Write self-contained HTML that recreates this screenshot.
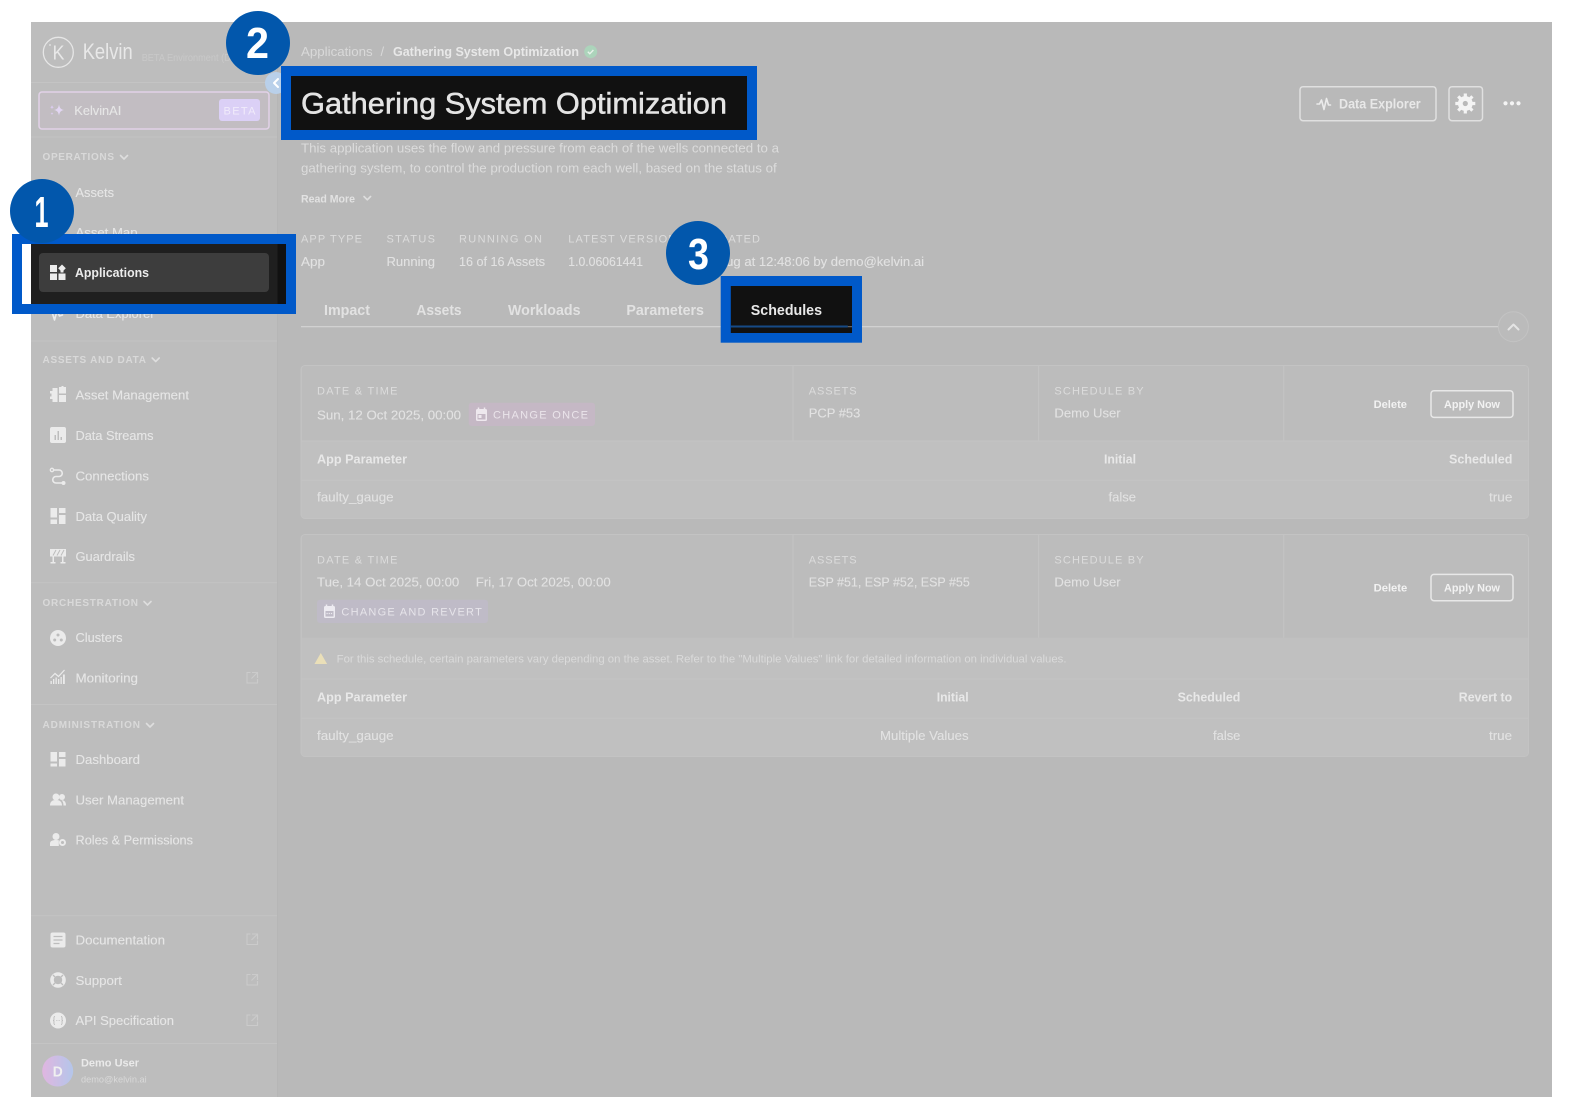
<!DOCTYPE html>
<html lang="en">
<head>
<meta charset="utf-8">
<title>Gathering System Optimization</title>
<style>
html,body{margin:0;padding:0;background:#fff;width:1584px;height:1120px;overflow:hidden}
svg{display:block}
text{font-family:"Liberation Sans",Arial,sans-serif;white-space:pre}
.n{font-size:13px;fill:#e6e6e6;stroke:#e6e6e6;stroke-width:.12}
.nb{font-size:13px;fill:#ececec;font-weight:bold}
.h{font-size:10px;fill:#d9d9d9;font-weight:bold}
.l{font-size:11px;fill:#dcdcdc}
.v{font-size:13px;fill:#e2e2e2;stroke:#e2e2e2;stroke-width:.1}
.b{font-size:13px;fill:#e8e8e8;font-weight:bold}
.s{font-size:11px;fill:#f2f2f2;font-weight:bold}
.t{font-size:15px;fill:#e2e2e2;font-weight:bold}
.i{fill:#ebebeb}
.ln{fill:none;stroke:#ebebeb;stroke-width:1.6;stroke-linecap:round;stroke-linejoin:round}
.ch{fill:none;stroke:#dedede;stroke-width:1.6;stroke-linecap:round;stroke-linejoin:round}
.ex{fill:none;stroke:#cbcbcb;stroke-width:1.1}
.d{stroke:#c4c4c4;stroke-width:1}
.num{font-size:44px;font-weight:bold;fill:#fff}
</style>
</head>
<body>
<svg xmlns="http://www.w3.org/2000/svg" width="1584" height="1120" viewBox="0 0 1584 1120">
<defs>
<linearGradient id="av" x1="0" y1="0" x2="1" y2="0"><stop offset="0" stop-color="#e0b6e0"/><stop offset="1" stop-color="#b4c6ea"/></linearGradient>
<filter id="soft" x="0" y="0" width="100%" height="100%" color-interpolation-filters="sRGB"><feGaussianBlur stdDeviation="0.35"/></filter>
</defs>
<rect width="1584" height="1120" fill="#fff"/>
<g filter="url(#soft)">
<rect x="31" y="22" width="1521" height="1075" fill="#b9b9b9"/>
<rect x="31" y="22" width="246.500" height="1075" fill="#bdbdbd"/>
<line x1="277.500" y1="22" x2="277.500" y2="1097" stroke="#b6b6b6"/>

<!-- logo -->
<circle cx="58.300" cy="52.300" r="15" fill="none" stroke="#e6e6e6" stroke-width="1.300"/>
<text x="52.500" y="59.500" font-size="20" fill="#e8e8e8" textLength="12" lengthAdjust="spacingAndGlyphs">K</text>
<circle cx="50" cy="45" r="0.900" fill="#e8e8e8"/>
<text x="82.700" y="59" font-size="22" fill="#e8e8e8" textLength="50" lengthAdjust="spacingAndGlyphs">Kelvin</text>
<text x="141.700" y="61" font-size="10" fill="#c9c9c9" textLength="110" lengthAdjust="spacingAndGlyphs">BETA Environment (Demo)</text>
<line class="d" x1="31" y1="82.500" x2="277" y2="82.500"/>
<circle cx="276" cy="83" r="11" fill="#b9d0ea"/>
<path d="M278 79l-4 4 4 4" fill="none" stroke="#fff" stroke-width="2" stroke-linecap="round" stroke-linejoin="round"/>

<!-- KelvinAI -->
<rect x="39" y="92" width="230" height="37" rx="3" fill="#c2bdc2" stroke="#e2d2e8" stroke-width="1.500"/>
<path d="M59 104.500c.8 3.800 1.700 4.700 5 5.500-3.300.8-4.200 1.700-5 5.500-.8-3.800-1.700-4.700-5-5.500 3.300-.8 4.200-1.700 5-5.500z" fill="#e2d6f2"/>
<path d="M52 105c.3 1.500.7 1.900 2 2.200-1.300.3-1.700.7-2 2.200-.3-1.500-.7-1.900-2-2.200 1.300-.3 1.700-.7 2-2.200zM52 112c.2 1.100.5 1.400 1.500 1.600-1 .2-1.300.5-1.500 1.600-.2-1.100-.5-1.400-1.500-1.600 1-.2 1.300-.5 1.500-1.600z" fill="#dccbf0"/>
<text class="n" x="74.300" y="115" textLength="47" lengthAdjust="spacingAndGlyphs">KelvinAI</text>
<rect x="219" y="99" width="41" height="22" rx="3" fill="#dbd0f6"/>
<text x="223.500" y="114.500" font-size="11" fill="#f0ebfa" textLength="32" lengthAdjust="spacing">BETA</text>
<line class="d" x1="31" y1="137" x2="277" y2="137"/>

<!-- Operations -->
<text class="h" x="42.500" y="160" textLength="71.500" lengthAdjust="spacing">OPERATIONS</text>
<path class="ch" d="M120.500 155.500l3.500 3.500 3.500-3.500"/>
<text class="n" x="75.500" y="197" textLength="38.500" lengthAdjust="spacingAndGlyphs">Assets</text>
<text class="n" x="75.500" y="237" textLength="62" lengthAdjust="spacingAndGlyphs">Asset Map</text>
<text class="n" x="75.500" y="318" textLength="79" lengthAdjust="spacingAndGlyphs">Data Explorer</text>
<path class="ln" d="M52 312l2.500 8 2.500-9 2.500 5 3-1"/>
<line class="d" x1="31" y1="341" x2="277" y2="341"/>

<!-- Assets and data -->
<text class="h" x="42.500" y="363" textLength="103.500" lengthAdjust="spacing">ASSETS AND DATA</text>
<path class="ch" d="M152.200 358l3.500 3.500 3.500-3.500"/>
<path class="i" d="M50 391h2.500v-3h5v14h-5v-3H50v-2.500h1.500v-3H50zM59 387h2.500v-1h2v1H66v6.500h-7zM59 395h7v7h-7z"/>
<text class="n" x="75.500" y="399.600" textLength="113.500" lengthAdjust="spacingAndGlyphs">Asset Management</text>
<path class="i" fill-rule="evenodd" d="M52 427h12a2 2 0 0 1 2 2v12a2 2 0 0 1-2 2H52a2 2 0 0 1-2-2v-12a2 2 0 0 1 2-2zm2.500 8v5h1.500v-5zm3-4v9H59v-9zm3 6v3H62v-3z"/>
<text class="n" x="75.500" y="440" textLength="78" lengthAdjust="spacingAndGlyphs">Data Streams</text>
<path class="ln" d="M53.500 470h5.500a3 3 0 0 1 0 6.500h-3a3 3 0 0 0 0 6.500h7"/>
<circle cx="52" cy="470" r="1.700" fill="none" stroke="#ebebeb" stroke-width="1.300"/>
<circle cx="63.500" cy="483" r="2" class="i"/>
<text class="n" x="75.500" y="480.400" textLength="73.500" lengthAdjust="spacingAndGlyphs">Connections</text>
<path class="i" d="M50.500 508h6.500v9.500h-6.500zM50.500 519.500H57v4.500h-6.500zM59 508h6.500v5H59zM59 515h6.500v9H59z"/>
<text class="n" x="75.500" y="520.800" textLength="71.500" lengthAdjust="spacingAndGlyphs">Data Quality</text>
<path class="i" d="M50 549h16v7.500H50z"/>
<path d="M53 555.500l3-5.500M57 555.500l3-5.500M61 555.500l3-5.500" stroke="#bdbdbd" stroke-width="1"/>
<path class="i" d="M52.500 556.500H54V562h1.500v1.500h-5V562h2zM62 556.500h1.500V562h2v1.500h-5V562H62z"/>
<text class="n" x="75.500" y="561.200" textLength="59.500" lengthAdjust="spacingAndGlyphs">Guardrails</text>
<line class="d" x1="31" y1="582.700" x2="277" y2="582.700"/>

<!-- Orchestration -->
<text class="h" x="42.500" y="606" textLength="95.500" lengthAdjust="spacing">ORCHESTRATION</text>
<path class="ch" d="M144 601.500l3.500 3.500 3.500-3.500"/>
<circle cx="58" cy="638" r="8" class="i"/>
<circle cx="58" cy="635" r="1.500" fill="#bdbdbd"/><circle cx="54.700" cy="640" r="1.500" fill="#bdbdbd"/><circle cx="61.300" cy="640" r="1.500" fill="#bdbdbd"/>
<text class="n" x="75.500" y="642" textLength="47" lengthAdjust="spacingAndGlyphs">Clusters</text>
<path class="i" d="M50.500 684h1.300v-3h-1.300zM53 684h1.300v-5H53zM55.500 684h1.300v-6.500h-1.300zM58 684h1.300v-5H58zM60.500 684h1.300v-7h-1.300zM63 684h1.800v-9.500H63z"/>
<path d="M50.500 678l4.500-4.500 3.500 3 6-6.500" fill="none" stroke="#ebebeb" stroke-width="1.200"/>
<text class="n" x="75.500" y="682.700" textLength="62.500" lengthAdjust="spacingAndGlyphs">Monitoring</text>
<path class="ex" d="M250.500 672.500H247v10.500h10.500v-4M252 672.500h5.500V678M257.500 672.500l-6 6"/>
<line class="d" x1="31" y1="704.500" x2="277" y2="704.500"/>

<!-- Administration -->
<text class="h" x="42.500" y="728" textLength="97.500" lengthAdjust="spacing">ADMINISTRATION</text>
<path class="ch" d="M146.500 723.500l3.500 3.500 3.500-3.500"/>
<path class="i" d="M50.500 752h6.500v9.500h-6.500zM50.500 763.500H57v3h-6.500zM59 752h6.500v5H59zM59 759h6.500v7.500H59z"/>
<text class="n" x="75.500" y="764" textLength="64.500" lengthAdjust="spacingAndGlyphs">Dashboard</text>
<circle cx="56" cy="797" r="3.500" class="i"/><circle cx="62" cy="797" r="3" class="i"/>
<path class="i" d="M50 805.500c0-4 2.500-5.500 6-5.500s6 1.500 6 5.500zM63.500 805.500c0-2-.5-4-2-5.200 3-.4 4.500 2 4.500 5.200z"/>
<text class="n" x="75.500" y="804.300" textLength="108.500" lengthAdjust="spacingAndGlyphs">User Management</text>
<circle cx="56" cy="836.500" r="3.500" class="i"/>
<path class="i" d="M50 846v-2.500c0-2.500 2.500-3.500 6-3.500 1 0 2 .1 2.800.3V846z"/>
<circle cx="62.500" cy="842.500" r="2.500" fill="none" stroke="#ebebeb" stroke-width="2"/>
<text class="n" x="75.500" y="844.700" textLength="117.500" lengthAdjust="spacingAndGlyphs">Roles &amp; Permissions</text>
<line class="d" x1="31" y1="915.700" x2="277" y2="915.700"/>

<!-- Bottom -->
<rect x="50.500" y="932.500" width="15" height="15" rx="2" class="i"/>
<path d="M53.500 936.500h9M53.500 940h9M53.500 943.500h6" stroke="#bdbdbd" stroke-width="1.300"/>
<text class="n" x="75.500" y="944.700" textLength="89.500" lengthAdjust="spacingAndGlyphs">Documentation</text>
<path class="ex" d="M250.500 934H247v10.500h10.500v-4M252 934h5.500v5.500M257.500 934l-6 6"/>
<circle cx="58" cy="980" r="6" fill="none" stroke="#ebebeb" stroke-width="3.600"/>
<path d="M53 975l3 3M63 975l-3 3M53 985l3-3M63 985l-3-3" stroke="#bdbdbd" stroke-width="1.300"/>
<text class="n" x="75.500" y="985" textLength="46.500" lengthAdjust="spacingAndGlyphs">Support</text>
<path class="ex" d="M250.500 974.500H247V985h10.500v-4M252 974.500h5.500v5.500M257.500 974.500l-6 6"/>
<circle cx="58" cy="1020.500" r="8" class="i"/>
<path d="M55 1016.500c-1.500 0-1 2-1 3s-1 1-1 1 1 0 1 1-.5 3 1 3M61 1016.500c1.500 0 1 2 1 3s1 1 1 1-1 0-1 1 .5 3-1 3" fill="none" stroke="#bdbdbd" stroke-width=".9"/>
<path d="M56 1020.500h.6M57.700 1020.500h.6M59.400 1020.500h.6" stroke="#bdbdbd" stroke-width="1"/>
<text class="n" x="75.500" y="1025" textLength="98.500" lengthAdjust="spacingAndGlyphs">API Specification</text>
<path class="ex" d="M250.500 1015H247v10.500h10.500v-4M252 1015h5.500v5.500M257.500 1015l-6 6"/>
<line class="d" x1="31" y1="1043.500" x2="277" y2="1043.500"/>
<circle cx="57.700" cy="1071" r="15.500" fill="url(#av)"/>
<text x="52.700" y="1076.500" font-size="15" font-weight="bold" fill="#f0f0f0" textLength="10" lengthAdjust="spacingAndGlyphs">D</text>
<text x="81" y="1066.700" font-size="11" font-weight="bold" fill="#eaeaea" textLength="58" lengthAdjust="spacingAndGlyphs">Demo User</text>
<text x="81" y="1082.700" font-size="9.500" fill="#d9d9d9" textLength="65.700" lengthAdjust="spacingAndGlyphs">demo@kelvin.ai</text>

<!-- Breadcrumb -->
<text x="301" y="56" font-size="13" fill="#d9d9d9" textLength="71.700" lengthAdjust="spacingAndGlyphs">Applications</text>
<text x="380.500" y="56" font-size="13" fill="#d9d9d9">/</text>
<text class="b" x="393" y="56" textLength="186" lengthAdjust="spacingAndGlyphs">Gathering System Optimization</text>
<circle cx="590.700" cy="51.700" r="6.500" fill="#acd4bb"/>
<path d="M587.800 51.800l2 2 3.600-3.800" fill="none" stroke="#e8f2ea" stroke-width="1.400"/>

<!-- Description -->
<text x="301" y="152.700" font-size="13" fill="#dcdcdc" textLength="478" lengthAdjust="spacingAndGlyphs">This application uses the flow and pressure from each of the wells connected to a</text>
<text x="301" y="172.700" font-size="13" fill="#dcdcdc" textLength="475.700" lengthAdjust="spacingAndGlyphs">gathering system, to control the production rom each well, based on the status of</text>
<text x="301" y="202.700" font-size="11" font-weight="bold" fill="#e2e2e2" textLength="54" lengthAdjust="spacingAndGlyphs">Read More</text>
<path class="ch" d="M364 196.500l3.300 3.300 3.300-3.300"/>

<!-- Meta -->
<text class="l" x="301" y="242.700" textLength="61" lengthAdjust="spacing">APP TYPE</text>
<text class="l" x="386.500" y="242.700" textLength="48.500" lengthAdjust="spacing">STATUS</text>
<text class="l" x="459" y="242.700" textLength="83" lengthAdjust="spacing">RUNNING ON</text>
<text class="l" x="568.300" y="242.700" textLength="108" lengthAdjust="spacing">LATEST VERSION</text>
<text class="l" x="702" y="242.700" textLength="58" lengthAdjust="spacing">UPDATED</text>
<text class="v" x="301" y="266" textLength="24" lengthAdjust="spacingAndGlyphs">App</text>
<text class="v" x="386.500" y="266" textLength="48.500" lengthAdjust="spacingAndGlyphs">Running</text>
<text class="v" x="459" y="266" textLength="86" lengthAdjust="spacingAndGlyphs">16 of 16 Assets</text>
<text class="v" x="568.300" y="266" textLength="74.700" lengthAdjust="spacingAndGlyphs">1.0.06061441</text>
<text class="v" x="700" y="266" textLength="224" lengthAdjust="spacingAndGlyphs">12 Aug at 12:48:06 by demo@kelvin.ai</text>

<!-- Tabs -->
<line x1="301" y1="326.700" x2="1499" y2="326.700" stroke="#d5d5d5" stroke-width="1.200"/>
<text class="t" x="324" y="315" textLength="46" lengthAdjust="spacingAndGlyphs">Impact</text>
<text class="t" x="416.400" y="315" textLength="45.200" lengthAdjust="spacingAndGlyphs">Assets</text>
<text class="t" x="508" y="315" textLength="72.500" lengthAdjust="spacingAndGlyphs">Workloads</text>
<text class="t" x="626.400" y="315" textLength="77.600" lengthAdjust="spacingAndGlyphs">Parameters</text>
<circle cx="1513.400" cy="326.700" r="15" fill="#bbbbbb" stroke="#c3c3c3"/>
<path d="M1508.500 329.500l5-5 5 5" fill="none" stroke="#e4e4e4" stroke-width="2" stroke-linecap="round" stroke-linejoin="round"/>

<!-- Top right buttons -->
<rect x="1300" y="86.700" width="136" height="34" rx="3" fill="none" stroke="#e0e0e0" stroke-width="1.500"/>
<path class="ln" d="M1317 104h2.500l2-4 2.500 9.500 2.500-11 2 6.500h2" stroke-width="2"/>
<text x="1339" y="108.300" font-size="14" font-weight="bold" fill="#e8e8e8" textLength="81.700" lengthAdjust="spacingAndGlyphs">Data Explorer</text>
<rect x="1449" y="86.700" width="33.500" height="34" rx="3" fill="none" stroke="#e0e0e0" stroke-width="1.500"/>
<circle cx="1465.300" cy="103.500" r="5" fill="none" stroke="#f4f4f4" stroke-width="4.800"/>
<path d="M1465.300 93.500v3M1465.300 110.500v3M1455.300 103.500h3M1472.300 103.500h3M1458.200 96.400l2.200 2.200M1470.200 108.400l2.200 2.200M1458.200 110.600l2.200-2.200M1470.200 98.600l2.200-2.200" stroke="#f4f4f4" stroke-width="3.200"/>
<circle cx="1505.500" cy="103.300" r="2.100" fill="#f4f4f4"/><circle cx="1512" cy="103.300" r="2.100" fill="#f4f4f4"/><circle cx="1518.500" cy="103.300" r="2.100" fill="#f4f4f4"/>

<!-- Card 1 -->
<rect x="301" y="365.500" width="1227.500" height="153" rx="4" fill="#c0c0c0" stroke="#c3c3c3"/>
<path d="M302 441V369a3 3 0 0 1 3-3h1220a3 3 0 0 1 3 3v72z" fill="#bcbcbc"/>
<line class="d" x1="301" y1="441" x2="1528" y2="441"/>
<line class="d" x1="301" y1="480.300" x2="1528" y2="480.300"/>
<line class="d" x1="793" y1="366" x2="793" y2="441"/>
<line class="d" x1="1038.600" y1="366" x2="1038.600" y2="441"/>
<line class="d" x1="1283.700" y1="366" x2="1283.700" y2="441"/>
<text class="l" x="317" y="394.700" textLength="80.500" lengthAdjust="spacing">DATE &amp; TIME</text>
<text class="v" x="317" y="419.300" textLength="144" lengthAdjust="spacingAndGlyphs">Sun, 12 Oct 2025, 00:00</text>
<rect x="468.700" y="402.700" width="126.300" height="23.300" rx="3" fill="#c5b8c5"/>
<rect x="476" y="409" width="11" height="12" rx="1.500" fill="#eee8ee"/>
<path d="M478.500 407.500v2M484.500 407.500v2" stroke="#eee8ee" stroke-width="1.500"/>
<rect x="477.500" y="414" width="8" height="5.500" fill="#c5b8c5"/>
<rect x="478.500" y="415" width="3" height="3" fill="#eee8ee"/>
<text class="l" x="493" y="418.700" style="fill:#eae4ea" textLength="95" lengthAdjust="spacing">CHANGE ONCE</text>
<text class="l" x="808.800" y="394.700" textLength="47.800" lengthAdjust="spacing">ASSETS</text>
<text class="v" x="808.800" y="417.300" textLength="51.500" lengthAdjust="spacingAndGlyphs">PCP #53</text>
<text class="l" x="1054.400" y="394.700" textLength="89.200" lengthAdjust="spacing">SCHEDULE BY</text>
<text class="v" x="1054.400" y="417.300" textLength="66.300" lengthAdjust="spacingAndGlyphs">Demo User</text>
<text class="s" x="1373.600" y="408" textLength="33.400" lengthAdjust="spacingAndGlyphs">Delete</text>
<rect x="1431" y="390.700" width="82" height="26.700" rx="3" fill="none" stroke="#e8e8e8" stroke-width="1.500"/>
<text class="s" x="1444" y="408" textLength="56" lengthAdjust="spacingAndGlyphs">Apply Now</text>
<text class="b" x="317" y="463.300" textLength="90" lengthAdjust="spacingAndGlyphs">App Parameter</text>
<text class="b" x="1104" y="463.300" textLength="32" lengthAdjust="spacingAndGlyphs">Initial</text>
<text class="b" x="1449" y="463.300" textLength="63.400" lengthAdjust="spacingAndGlyphs">Scheduled</text>
<text class="v" x="317" y="501.700" textLength="76.600" lengthAdjust="spacingAndGlyphs">faulty_gauge</text>
<text class="v" x="1108.500" y="501.700" textLength="27.500" lengthAdjust="spacingAndGlyphs">false</text>
<text class="v" x="1489" y="501.700" textLength="23.400" lengthAdjust="spacingAndGlyphs">true</text>

<!-- Card 2 -->
<rect x="301" y="534.500" width="1227.500" height="222" rx="4" fill="#c0c0c0" stroke="#c3c3c3"/>
<path d="M302 637.700V538a3 3 0 0 1 3-3h1220a3 3 0 0 1 3 3v99.700z" fill="#bcbcbc"/>
<line class="d" x1="301" y1="679" x2="1528" y2="679"/>
<line class="d" x1="301" y1="718.300" x2="1528" y2="718.300"/>
<line class="d" x1="793" y1="535" x2="793" y2="637.700"/>
<line class="d" x1="1038.600" y1="535" x2="1038.600" y2="637.700"/>
<line class="d" x1="1283.700" y1="535" x2="1283.700" y2="637.700"/>
<text class="l" x="317" y="563.700" textLength="80.500" lengthAdjust="spacing">DATE &amp; TIME</text>
<text class="v" x="317" y="586.300" textLength="142.300" lengthAdjust="spacingAndGlyphs">Tue, 14 Oct 2025, 00:00</text>
<text class="v" x="475.800" y="586.300" textLength="134.900" lengthAdjust="spacingAndGlyphs">Fri, 17 Oct 2025, 00:00</text>
<rect x="317" y="599.700" width="171" height="23.300" rx="3" fill="#bfbbc7"/>
<rect x="324" y="606" width="11" height="12" rx="1.500" fill="#edebf1"/>
<path d="M326.500 604.500v2M332.500 604.500v2" stroke="#edebf1" stroke-width="1.500"/>
<rect x="325.500" y="611" width="8" height="5.500" fill="#bfbbc7"/>
<path d="M326.500 613.500h6" stroke="#edebf1" stroke-width="1.200" stroke-dasharray="1.200 1"/>
<text class="l" x="341.400" y="615.700" style="fill:#e6e4ea" textLength="140.400" lengthAdjust="spacing">CHANGE AND REVERT</text>
<text class="l" x="808.800" y="563.700" textLength="47.800" lengthAdjust="spacing">ASSETS</text>
<text class="v" x="808.800" y="586.300" textLength="161" lengthAdjust="spacingAndGlyphs">ESP #51, ESP #52, ESP #55</text>
<text class="l" x="1054.400" y="563.700" textLength="89.200" lengthAdjust="spacing">SCHEDULE BY</text>
<text class="v" x="1054.400" y="586.300" textLength="66.300" lengthAdjust="spacingAndGlyphs">Demo User</text>
<text class="s" x="1373.600" y="591.700" textLength="33.700" lengthAdjust="spacingAndGlyphs">Delete</text>
<rect x="1431" y="574.400" width="82" height="26.300" rx="3" fill="none" stroke="#e8e8e8" stroke-width="1.500"/>
<text class="s" x="1444" y="591.700" textLength="56" lengthAdjust="spacingAndGlyphs">Apply Now</text>
<path d="M320.800 653l6.300 11h-12.600z" fill="#eadfb8"/>
<text x="336.700" y="662.300" font-size="11" fill="#dadada" textLength="729.800" lengthAdjust="spacingAndGlyphs">For this schedule, certain parameters vary depending on the asset. Refer to the "Multiple Values" link for detailed information on individual values.</text>
<text class="b" x="317" y="701.700" textLength="90" lengthAdjust="spacingAndGlyphs">App Parameter</text>
<text class="b" x="936.700" y="701.700" textLength="31.900" lengthAdjust="spacingAndGlyphs">Initial</text>
<text class="b" x="1177.600" y="701.700" textLength="62.800" lengthAdjust="spacingAndGlyphs">Scheduled</text>
<text class="b" x="1458.800" y="701.700" textLength="53.400" lengthAdjust="spacingAndGlyphs">Revert to</text>
<text class="v" x="317" y="740" textLength="76.600" lengthAdjust="spacingAndGlyphs">faulty_gauge</text>
<text class="v" x="880" y="740" textLength="88.600" lengthAdjust="spacingAndGlyphs">Multiple Values</text>
<text class="v" x="1213" y="740" textLength="27.400" lengthAdjust="spacingAndGlyphs">false</text>
<text class="v" x="1489" y="740" textLength="23" lengthAdjust="spacingAndGlyphs">true</text>

<!-- Highlight 1 -->
<rect x="12" y="234" width="284" height="80" fill="#0059c9"/>
<rect x="22" y="244" width="9" height="60" fill="#fff"/>
<rect x="31" y="244" width="246.500" height="60" fill="#1f1f1f"/>
<rect x="277.500" y="244" width="8.500" height="60" fill="#111"/>
<rect x="39" y="253" width="230" height="39" rx="4" fill="#3d3d3d"/>
<path d="M50 265h7v7h-7zM50 273.500h7v6.500h-7zM58.500 273.500H65.500v6.500h-7zM62 264.500l3.800 3.800-2.300 2.300v1.900h-3v-1.900l-2.300-2.300z" fill="#ececec"/>
<text class="nb" x="75" y="277" textLength="74" lengthAdjust="spacingAndGlyphs">Applications</text>

<!-- Highlight 2 -->
<rect x="281" y="66" width="476" height="74" fill="#0059c9"/>
<rect x="291" y="76" width="456" height="54" fill="#111"/>
<text x="301" y="113.500" font-size="30" fill="#e4e4e4" stroke="#e4e4e4" stroke-width=".5" textLength="426" lengthAdjust="spacingAndGlyphs">Gathering System Optimization</text>

<!-- Highlight 3 -->
<rect x="720.700" y="276" width="141.300" height="66.700" fill="#0059c9"/>
<rect x="730.800" y="286" width="121.200" height="47" fill="#111"/>
<text x="750.800" y="315" font-size="15" font-weight="bold" fill="#e8e8e8" textLength="71.200" lengthAdjust="spacingAndGlyphs">Schedules</text>
<rect x="730.800" y="325.500" width="117" height="2" fill="#164a86"/>
<rect x="847.800" y="326.200" width="4.200" height="1" fill="#777"/>

<!-- Number circles -->
<circle cx="42" cy="211" r="32" fill="#0257ac"/>
<text class="num" x="34.500" y="227" textLength="14" lengthAdjust="spacingAndGlyphs">1</text>
<circle cx="258" cy="43" r="32" fill="#0257ac"/>
<text class="num" x="246" y="58" textLength="23" lengthAdjust="spacingAndGlyphs">2</text>
<circle cx="698" cy="253" r="32" fill="#0257ac"/>
<text class="num" x="688" y="269" textLength="21" lengthAdjust="spacingAndGlyphs">3</text>
</g>
</svg>
</body>
</html>
